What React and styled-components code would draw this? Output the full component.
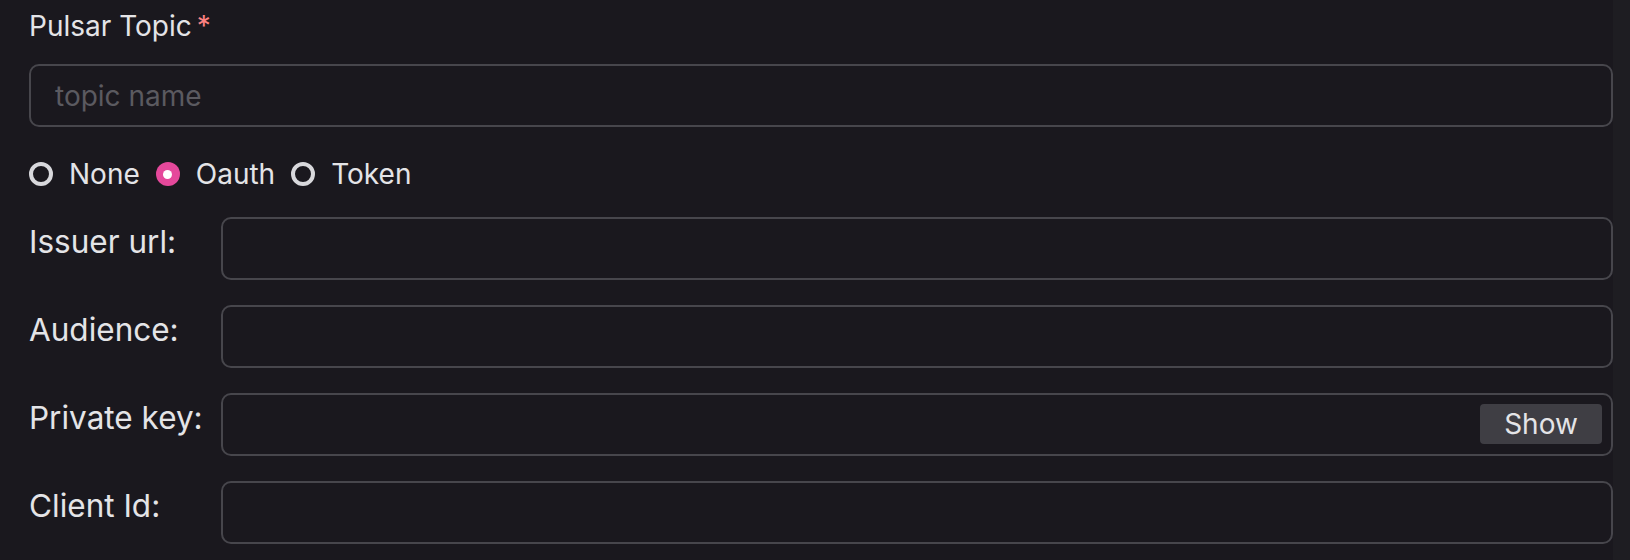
import React from "react";
import styled, { createGlobalStyle } from "styled-components";

const Global = createGlobalStyle`
  html, body { margin: 0; padding: 0; background: #1a181e; }
  body { font-family: Inter, "Noto Sans", sans-serif; color: #e4e4e7; }
`;

const Page = styled.div`
  display: flex;
  width: 1630px;
  height: 560px;
  overflow: hidden;
  background: #1a181e;
`;

const Main = styled.div`
  flex: 1;
  display: flex;
  flex-direction: column;
  padding: 8px 0 0 29px;
`;

const Strip = styled.div`
  width: 17px;
  background: #1e1d22;
`;

const FieldLabel = styled.label`
  font-size: 28px;
  line-height: 36px;
  color: #e4e4e7;
  margin-bottom: 20px;
`;

const Star = styled.span`
  color: #fc8181;
  margin-left: 5px;
`;

const Input = styled.input`
  box-sizing: border-box;
  width: 100%;
  height: 63px;
  background: transparent;
  border: 2px solid #47464c;
  border-radius: 10px;
  padding: 0 24px;
  font-family: Inter, sans-serif;
  font-size: 28px;
  color: #e4e4e7;
  outline: none;
  &::placeholder { color: #5b5a60; }
`;

const RadioRow = styled.div`
  display: flex;
  align-items: center;
  height: 38px;
  margin: 28px 0 24px;
`;

const RadioItem = styled.label`
  display: flex;
  align-items: center;
  gap: 16px;
  margin-right: 16px;
  font-size: 28px;
  color: #e4e4e7;
`;

const Dot = styled.span`
  box-sizing: border-box;
  width: 24px;
  height: 24px;
  border-radius: 50%;
  display: flex;
  align-items: center;
  justify-content: center;
  border: ${(p) => (p.$on ? "none" : "4px solid #d8d8dc")};
  background: ${(p) => (p.$on ? "#e5489b" : "transparent")};
  &::after {
    content: "";
    display: ${(p) => (p.$on ? "block" : "none")};
    width: 9px;
    height: 9px;
    border-radius: 50%;
    background: #ffffff;
  }
`;

const Rows = styled.div`
  display: flex;
  flex-direction: column;
  gap: 25px;
`;

const Row = styled.div`
  display: flex;
  align-items: flex-start;
`;

const RowLabel = styled.div`
  width: 192px;
  flex: none;
  font-size: 31.5px;
  line-height: 44px;
  padding-top: 3px;
  color: #e4e4e7;
`;

const InputWrap = styled.div`
  position: relative;
  flex: 1;
`;

const ShowButton = styled.button`
  position: absolute;
  right: 11px;
  top: 11px;
  width: 122px;
  height: 40px;
  border: none;
  border-radius: 4px;
  background: #3f3e44;
  color: #e4e4e7;
  font-family: Inter, sans-serif;
  font-size: 28px;
  cursor: pointer;
`;

const fields = ["Issuer url:", "Audience:", "Private key:", "Client Id:"];

export default function App() {
  return (
    <>
      <Global />
      <Page>
        <Main>
          <FieldLabel>
            Pulsar Topic<Star>*</Star>
          </FieldLabel>
          <Input placeholder="topic name" />
          <RadioRow>
            <RadioItem>
              <Dot />
              None
            </RadioItem>
            <RadioItem>
              <Dot $on />
              Oauth
            </RadioItem>
            <RadioItem>
              <Dot />
              Token
            </RadioItem>
          </RadioRow>
          <Rows>
            {fields.map((f) => (
              <Row key={f}>
                <RowLabel>{f}</RowLabel>
                <InputWrap>
                  <Input type={f === "Private key:" ? "password" : "text"} />
                  {f === "Private key:" && <ShowButton>Show</ShowButton>}
                </InputWrap>
              </Row>
            ))}
          </Rows>
        </Main>
        <Strip />
      </Page>
    </>
  );
}
